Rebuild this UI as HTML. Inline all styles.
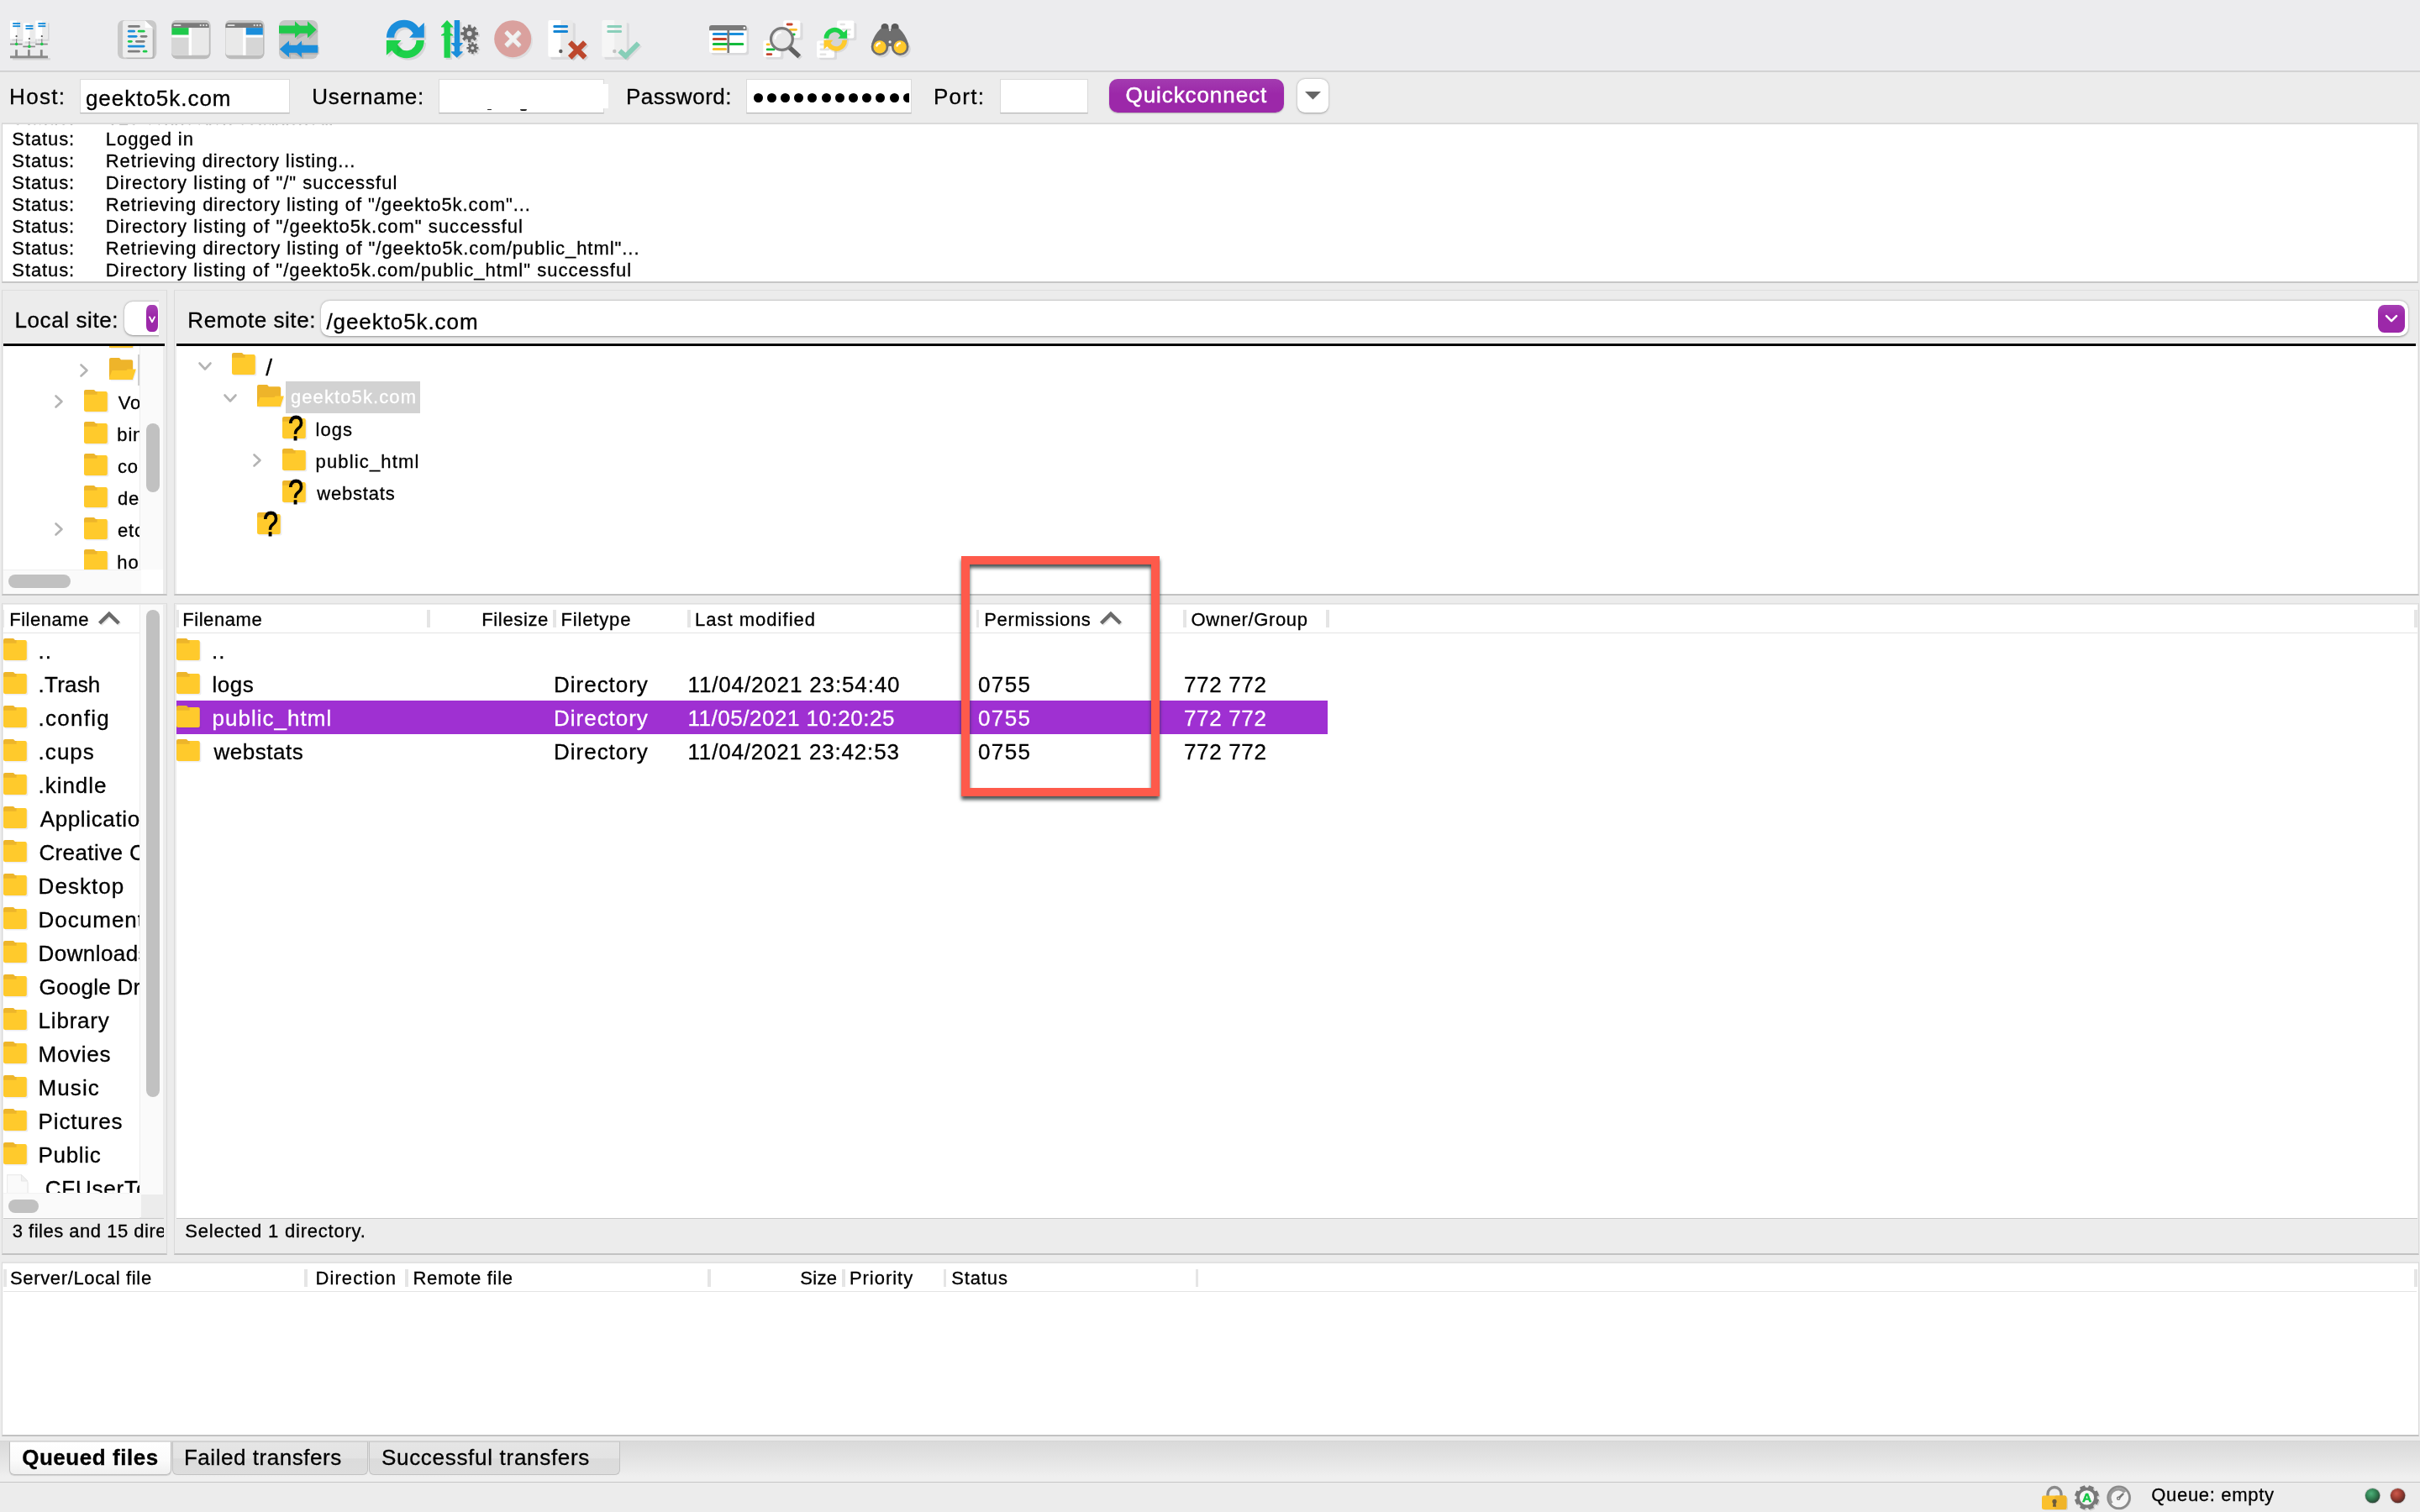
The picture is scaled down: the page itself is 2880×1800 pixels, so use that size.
<!DOCTYPE html>
<html lang="en"><head><meta charset="utf-8"><title>FileZilla</title>
<style>
html,body{margin:0;padding:0;}
body{width:2880px;height:1800px;overflow:hidden;background:#ECECEC;font-family:"Liberation Sans", sans-serif;position:relative;will-change:transform;}
div,span.t,svg{position:absolute;box-sizing:border-box;}
span.t{white-space:pre;line-height:1;-webkit-text-stroke:0.3px currentColor;-webkit-font-smoothing:antialiased;}
.clip{overflow:hidden;}
</style></head><body>
<div style="left:0px;top:0px;width:2880px;height:84px;background:#ECECEE;"></div>
<div style="left:0px;top:84px;width:2880px;height:2px;background:linear-gradient(#C9C9C9,#DDDDDD);"></div>
<svg style="left:12px;top:24.5px;" width="48" height="47" viewBox="0 0 48 47" overflow="visible"><rect x="2.5" y="2.5" width="14" height="21.3" fill="#000" opacity=".09"/><rect x="32.7" y="2.5" width="14" height="21.3" fill="#000" opacity=".09"/><rect x="17.8" y="5.4" width="14" height="21.3" fill="#000" opacity=".09"/><rect x="0" y="-0.5" width="14.4" height="21.9" fill="#fff"/><rect x="8" y="-0.5" width="6.4" height="21.9" fill="#EAEAEA"/><rect x="3.2" y="2.1" width="8.9" height="1.9" fill="#1B8EDB"/><rect x="3.2" y="5.2" width="8.9" height="1.9" fill="#1B8EDB"/><circle cx="7.6" cy="18.2" r="1.1" fill="#555"/><rect x="7" y="21.3" width="1.2" height="6" fill="#8A8A8A"/><rect x="0" y="26.7" width="14.6" height="1.7" fill="#8A8A8A"/><circle cx="7.6" cy="27.5" r="1.8" fill="#1FC94B"/><rect x="6.2" y="28.4" width="0" height="0"/><rect x="30.2" y="-0.5" width="14.4" height="21.9" fill="#fff"/><rect x="38.2" y="-0.5" width="6.4" height="21.9" fill="#EAEAEA"/><rect x="33.4" y="2.1" width="8.9" height="1.9" fill="#1B8EDB"/><rect x="33.4" y="5.2" width="8.9" height="1.9" fill="#1B8EDB"/><circle cx="37.8" cy="18.2" r="1.1" fill="#555"/><rect x="37.2" y="21.3" width="1.2" height="6" fill="#8A8A8A"/><rect x="30.2" y="26.7" width="14.6" height="1.7" fill="#8A8A8A"/><circle cx="37.8" cy="27.5" r="1.8" fill="#1FC94B"/><rect x="36.4" y="28.4" width="0" height="0"/><rect x="15.3" y="2.4" width="14.4" height="21.9" fill="#fff"/><rect x="23.3" y="2.4" width="6.4" height="21.9" fill="#EAEAEA"/><rect x="18.5" y="5.0" width="8.9" height="1.9" fill="#1B8EDB"/><rect x="18.5" y="8.1" width="8.9" height="1.9" fill="#1B8EDB"/><circle cx="22.9" cy="21.099999999999998" r="1.1" fill="#555"/><rect x="22.3" y="24.2" width="1.2" height="6" fill="#8A8A8A"/><rect x="15.3" y="29.599999999999998" width="14.6" height="1.7" fill="#8A8A8A"/><circle cx="22.9" cy="30.4" r="1.8" fill="#1FC94B"/><rect x="21.5" y="31.299999999999997" width="0" height="0"/><rect x="6.1" y="34.2" width="2.8" height="8" fill="#8A8A8A"/><rect x="21.0" y="34.2" width="2.8" height="8" fill="#8A8A8A"/><rect x="35.9" y="34.2" width="2.8" height="8" fill="#8A8A8A"/><rect x="3" y="44" width="45" height="2.6" fill="#000" opacity=".09"/><rect x="0" y="41.4" width="45" height="2.9" fill="#8A8A8A"/></svg>
<svg style="left:140px;top:24px;" width="47" height="47" viewBox="0 0 47 47" overflow="visible"><rect x="0" y="0" width="46.3" height="46.3" rx="7" fill="#C9C9C9"/><path d="M8 3h26l9.5 9v34h-30A5.5 5.5 0 0 1 8 40.5z" fill="#000" opacity=".10"/><path d="M6.1 3A2.5 2.5 0 0 1 8.6 0.5h24l9.1 8.6v33A2.5 2.5 0 0 1 39.2 44.6H8.6A2.5 2.5 0 0 1 6.1 42.1z" fill="#EEEEEE"/><path d="M32.6 0.5l9.1 8.6h-9.1z" fill="#fff"/><rect x="12.2" y="6.0" width="14.6" height="2.8" rx="1.4" fill="#7E7E7E"/><rect x="11.9" y="11.799999999999999" width="9.1" height="2.8" rx="1.4" fill="#1B8EDB"/><rect x="23.8" y="11.799999999999999" width="8.8" height="2.8" rx="1.4" fill="#1FC94B"/><rect x="11.9" y="17.900000000000002" width="11.6" height="2.8" rx="1.4" fill="#1B8EDB"/><rect x="26.8" y="17.900000000000002" width="8.6" height="2.8" rx="1.4" fill="#7E7E7E"/><rect x="11.9" y="23.900000000000002" width="5.8" height="2.8" rx="1.4" fill="#1FC94B"/><rect x="21" y="23.900000000000002" width="11.6" height="2.8" rx="1.4" fill="#7E7E7E"/><rect x="11.9" y="29.700000000000003" width="20.7" height="2.8" rx="1.4" fill="#1B8EDB"/><rect x="11.9" y="35.800000000000004" width="14.9" height="2.8" rx="1.4" fill="#7E7E7E"/><rect x="29.8" y="35.800000000000004" width="5.6" height="2.8" rx="1.4" fill="#1FC94B"/></svg>
<svg style="left:204px;top:24px;" width="47" height="47" viewBox="0 0 47 47" overflow="visible"><rect x="0" y="0" width="46.6" height="46.2" rx="7" fill="#BCBCBC"/><rect x="0" y="0" width="46.6" height="12" rx="6" fill="#C8C8C8"/><clipPath id="wc204"><rect x="0.4" y="3.3" width="44.4" height="38.4" rx="3.5"/></clipPath><g clip-path="url(#wc204)"><rect x="0" y="3" width="47" height="6.2" fill="#7A7A7A"/><rect x="0" y="9.1" width="47" height="33" fill="#E9E9E9"/><rect x="0" y="9.1" width="20.7" height="8.6" fill="#1FC94B"/><rect x="0" y="17.7" width="20.7" height="3" fill="#fff"/><rect x="0" y="20.7" width="20.7" height="21" fill="#D6D6D6"/><rect x="20.7" y="9.1" width="3.3" height="33" fill="#fff"/></g><rect x="2.5" y="5.2" width="9" height="1.8" rx=".9" fill="#E6E6E6"/><circle cx="34.7" cy="6.1" r="1.1" fill="#E6E6E6"/><circle cx="38.2" cy="6.1" r="1.1" fill="#E6E6E6"/><circle cx="41.7" cy="6.1" r="1.1" fill="#E6E6E6"/></svg>
<svg style="left:268px;top:24px;" width="47" height="47" viewBox="0 0 47 47" overflow="visible"><rect x="0" y="0" width="46.6" height="46.2" rx="7" fill="#BCBCBC"/><rect x="0" y="0" width="46.6" height="12" rx="6" fill="#C8C8C8"/><clipPath id="wc268"><rect x="0.4" y="3.3" width="44.4" height="38.4" rx="3.5"/></clipPath><g clip-path="url(#wc268)"><rect x="0" y="3" width="47" height="6.2" fill="#7A7A7A"/><rect x="0" y="9.1" width="47" height="33" fill="#E9E9E9"/><rect x="24.5" y="9.1" width="22" height="8.6" fill="#1B8EDB"/><rect x="24.5" y="17.7" width="22" height="3" fill="#fff"/><rect x="24.5" y="20.7" width="22" height="21" fill="#D6D6D6"/><rect x="21.2" y="9.1" width="3.3" height="33" fill="#fff"/></g><rect x="2.5" y="5.2" width="9" height="1.8" rx=".9" fill="#E6E6E6"/><circle cx="34.7" cy="6.1" r="1.1" fill="#E6E6E6"/><circle cx="38.2" cy="6.1" r="1.1" fill="#E6E6E6"/><circle cx="41.7" cy="6.1" r="1.1" fill="#E6E6E6"/></svg>
<svg style="left:332px;top:24px;" width="47" height="47" viewBox="0 0 47 47" overflow="visible"><rect x="0" y="0" width="46.3" height="46.3" rx="7" fill="#C6C6C6"/><g fill="#000" opacity=".10" transform="translate(2,2)"><path d="M0 6.6H19V1.2L29.5 11.2L34 6.8V1.2L44.6 11.2L34 21.2V15.8H29.7L19 21.2V15.7H0z"/><path d="M46 29.8H27V24.6L16.5 34.4L12 29.9V24.6L.8 34.4L12 44.2V38.8H16.3L27 44.2V38.8H46z"/></g><path d="M0 6.6H19V1.2L29.5 11.2L34 6.8V1.2L44.6 11.2L34 21.2V15.6L29.5 11.2L19 21.2V15.7H0z" fill="#1FC94B"/><path d="M19 6.6H34V15.7H19z" fill="#1FC94B"/><path d="M46.3 29.8H27V24.6L16.5 34.4L12 29.9V24.6L.8 34.4L12 44.2V38.8L16.5 34.4L27 44.2V38.8H46.3z" fill="#1B8EDB"/><path d="M12 29.8H27V38.8H12z" fill="#1B8EDB"/></svg>
<svg style="left:460px;top:24px;" width="48" height="48" viewBox="0 0 48 48" overflow="visible"><g transform="translate(2.4,2.6)" opacity=".09" fill="#000"><path d="M-0.1 20.8A21 21 0 0 1 38.3 8.9L44.8 3.1V20.8H27.1L31.7 15.8A11.7 11.7 0 0 0 9.2 20.8Z"/><path d="M-0.1 20.8A21 21 0 0 1 38.3 8.9L44.8 3.1V20.8H27.1L31.7 15.8A11.7 11.7 0 0 0 9.2 20.8Z" transform="rotate(180 22.34 22.43)"/></g><path d="M-0.1 20.8A21 21 0 0 1 38.3 8.9L44.8 3.1V20.8H27.1L31.7 15.8A11.7 11.7 0 0 0 9.2 20.8Z" fill="#1B8EDB"/><path d="M-0.1 20.8A21 21 0 0 1 38.3 8.9L44.8 3.1V20.8H27.1L31.7 15.8A11.7 11.7 0 0 0 9.2 20.8Z" fill="#1CD14A" transform="rotate(180 22.34 22.43)"/><path d="M8.5 29.5L15 36L8.5 42z" fill="#12BD3E" opacity=".55" transform="translate(4,-1)"/></svg>
<svg style="left:524.6px;top:24px;" width="48" height="48" viewBox="0 0 48 48" overflow="visible"><g transform="translate(2.2,2.4)" fill="#000" opacity=".09"><path d="M7.05 0.1L14.1 7.4V8.4H10.8V15.2L14.1 17.5V18.5H10.8V44.7H3.5V18.5H0V17.5L3.5 15.2V8.4H0V7.4Z"/><path d="M15.7 -0.1H22.1V27H25.7V28L22.1 31.2V37.2H25.7V38.2L18.7 44.7L11.9 38.2V37.2H15.7V31.2L11.9 28V27H15.7Z"/></g><path d="M7.05 0.1L14.1 7.4V8.4H10.8V15.2L14.1 17.5V18.5H10.8V44.7H3.5V18.5H0V17.5L3.5 15.2V8.4H0V7.4Z" fill="#1CD14A"/><path d="M15.7 -0.1H22.1V27H25.7V28L22.1 31.2V37.2H25.7V38.2L18.7 44.7L11.9 38.2V37.2H15.7V31.2L11.9 28V27H15.7Z" fill="#1B8EDB"/><g transform="translate(1.8,2)" opacity=".10"><polygon points="44.09,14.18 44.09,17.82 40.75,17.70 39.87,19.81 42.32,22.10 39.75,24.67 37.46,22.22 35.35,23.10 35.47,26.44 31.83,26.44 31.95,23.10 29.84,22.22 27.55,24.67 24.98,22.10 27.43,19.81 26.55,17.70 23.21,17.82 23.21,14.18 26.55,14.30 27.43,12.19 24.98,9.90 27.55,7.33 29.84,9.78 31.95,8.90 31.83,5.56 35.47,5.56 35.35,8.90 37.46,9.78 39.75,7.33 42.32,9.90 39.87,12.19 40.75,14.30" fill="#000"/><polygon points="44.39,31.98 44.39,34.42 42.16,34.34 41.58,35.76 43.21,37.28 41.48,39.01 39.96,37.38 38.54,37.96 38.62,40.19 36.18,40.19 36.26,37.96 34.84,37.38 33.32,39.01 31.59,37.28 33.22,35.76 32.64,34.34 30.41,34.42 30.41,31.98 32.64,32.06 33.22,30.64 31.59,29.12 33.32,27.39 34.84,29.02 36.26,28.44 36.18,26.21 38.62,26.21 38.54,28.44 39.96,29.02 41.48,27.39 43.21,29.12 41.58,30.64 42.16,32.06" fill="#000"/></g><polygon points="44.09,14.18 44.09,17.82 40.75,17.70 39.87,19.81 42.32,22.10 39.75,24.67 37.46,22.22 35.35,23.10 35.47,26.44 31.83,26.44 31.95,23.10 29.84,22.22 27.55,24.67 24.98,22.10 27.43,19.81 26.55,17.70 23.21,17.82 23.21,14.18 26.55,14.30 27.43,12.19 24.98,9.90 27.55,7.33 29.84,9.78 31.95,8.90 31.83,5.56 35.47,5.56 35.35,8.90 37.46,9.78 39.75,7.33 42.32,9.90 39.87,12.19 40.75,14.30" fill="#6A6A6A"/><circle cx="33.65" cy="16" r="3.0" fill="#DDDDDF"/><polygon points="44.39,31.98 44.39,34.42 42.16,34.34 41.58,35.76 43.21,37.28 41.48,39.01 39.96,37.38 38.54,37.96 38.62,40.19 36.18,40.19 36.26,37.96 34.84,37.38 33.32,39.01 31.59,37.28 33.22,35.76 32.64,34.34 30.41,34.42 30.41,31.98 32.64,32.06 33.22,30.64 31.59,29.12 33.32,27.39 34.84,29.02 36.26,28.44 36.18,26.21 38.62,26.21 38.54,28.44 39.96,29.02 41.48,27.39 43.21,29.12 41.58,30.64 42.16,32.06" fill="#6A6A6A"/><circle cx="37.4" cy="33.2" r="1.9" fill="#DDDDDF"/></svg>
<svg style="left:588px;top:24px;" width="48" height="48" viewBox="0 0 48 48" overflow="visible"><circle cx="24" cy="24.6" r="22" fill="#000" opacity=".06"/><circle cx="22.2" cy="22.2" r="22" fill="#DAA19E"/><path d="M14 13.8L30.4 30.2M30.4 13.8L14 30.2" stroke="#D9D9D9" stroke-width="4.8" transform="translate(.6,1.2)"/><path d="M14 13.8L30.4 30.2M30.4 13.8L14 30.2" stroke="#F2F2F2" stroke-width="4.8"/></svg>
<svg style="left:652px;top:24px;" width="50" height="50" viewBox="0 0 50 50" overflow="visible"><rect x="3.4" y="3.2" width="29.5" height="43.8" rx="2" fill="#000" opacity=".07"/><rect x=".3" y="0" width="29.5" height="43.8" rx="2" fill="#E9E9E9"/><path d="M2.3 0H15.2V43.8H2.3A2 2 0 0 1 .3 41.8V2A2 2 0 0 1 2.3 0z" fill="#FFFFFF"/><rect x="6.4" y="6" width="17.6" height="2.9" rx="1.2" fill="#1585D4"/><rect x="6.4" y="12" width="17.6" height="2.9" rx="1.2" fill="#1585D4"/><circle cx="15.3" cy="37" r="2.2" fill="#5E5E5E"/><path d="M26.2 26.4L44.2 44.4M44.2 26.4L26.2 44.4" stroke="#000" opacity=".10" stroke-width="6.3" transform="translate(2,2)"/><path d="M26.2 26.4L44.2 44.4M44.2 26.4L26.2 44.4" stroke="#BD472D" stroke-width="6.3"/></svg>
<svg style="left:716px;top:24px;" width="50" height="50" viewBox="0 0 50 50" overflow="visible"><rect x="3.4" y="3.2" width="29.5" height="43.8" rx="2" fill="#000" opacity=".07"/><rect x=".3" y="0" width="29.5" height="43.8" rx="2" fill="#EEEEEE"/><path d="M2.3 0H15.2V43.8H2.3A2 2 0 0 1 .3 41.8V2A2 2 0 0 1 2.3 0z" fill="#F6F6F6"/><rect x="6.4" y="6" width="17.6" height="2.9" rx="1.2" fill="#8ACFBA"/><rect x="6.4" y="12" width="17.6" height="2.9" rx="1.2" fill="#8ACFBA"/><circle cx="15.3" cy="37" r="2.2" fill="#C2C2C2"/><path d="M21.4 36.5L28.5 42.8L43.8 27.5" fill="none" stroke="#000" opacity=".07" stroke-width="5.9" transform="translate(2,2)"/><path d="M21.4 36.5L28.5 42.8L43.8 27.5" fill="none" stroke="#87CEB8" stroke-width="5.9"/></svg>
<svg style="left:844px;top:29.8px;" width="48" height="36" viewBox="0 0 48 36" overflow="visible"><rect x="2.6" y="2.6" width="44.6" height="33" rx="3" fill="#000" opacity=".08"/><rect x="0" y="0" width="44.6" height="33" rx="3" fill="#fff"/><path d="M0 6.2V3A3 3 0 0 1 3 0H41.6A3 3 0 0 1 44.6 3V6.2z" fill="#7A7A7A"/><circle cx="41.8" cy="3.2" r="1.2" fill="#fff"/><rect x="3.8" y="8.9" width="37.5" height="3" rx="1.5" fill="#1B8EDB"/><rect x="3.8" y="15.0" width="17.2" height="3" rx="1.5" fill="#C5432B"/><rect x="3.8" y="21.1" width="37.5" height="3" rx="1.5" fill="#13BB3C"/><rect x="3.8" y="27.1" width="17.2" height="3" rx="1.5" fill="#FBC02D"/><rect x="21.4" y="5.8" width="2.7" height="27.2" fill="#7A7A7A"/></svg>
<svg style="left:908px;top:24.5px;" width="48" height="48" viewBox="0 0 48 48" overflow="visible"><rect x="27.4" y="2" width="20.2" height="20.8" rx="2" fill="#000" opacity=".07"/><rect x="3.5" y="25.8" width="20.9" height="20" rx="2" fill="#000" opacity=".07"/><rect x="24.2" y="-0.8" width="20.2" height="20.8" rx="2" fill="#fff"/><rect x=".3" y="23" width="20.9" height="20" rx="2" fill="#fff"/><rect x="27.7" y="2.6" width="7.9" height="2.8" rx="1.4" fill="#C5432B"/><rect x="31" y="8.9" width="9.9" height="2.8" rx="1.4" fill="#FBC02D"/><rect x="35" y="14.6" width="3.6" height="2.8" rx="1.4" fill="#13BB3C"/><rect x="3.7" y="26.5" width="5.0" height="2.8" rx="1.4" fill="#FBC02D"/><rect x="3.7" y="32.5" width="10.8" height="2.8" rx="1.4" fill="#13BB3C"/><rect x="3.7" y="38.300000000000004" width="7.5" height="2.8" rx="1.4" fill="#C5432B"/><path d="M31.5 31.5L43.2 42.2" stroke="#000" opacity=".10" stroke-width="5.6" transform="translate(1.8,2)"/><circle cx="24" cy="23.4" r="13" fill="#000" opacity=".08"/><path d="M31.5 31.5L43.2 42.2" stroke="#606060" stroke-width="5.6"/><circle cx="22.4" cy="21.5" r="12.9" fill="#E9E9E9" stroke="#7A7A7A" stroke-width="3.2"/><path d="M14.5 21A8 8 0 0 1 21 13.7" fill="none" stroke="#fff" stroke-width="2.2" stroke-linecap="round"/></svg>
<svg style="left:972px;top:24.5px;" width="48" height="48" viewBox="0 0 48 48" overflow="visible"><rect x="27" y="2.2" width="20.4" height="21" rx="2" fill="#000" opacity=".07"/><rect x="3.1" y="26" width="20.9" height="20.3" rx="2" fill="#000" opacity=".07"/><rect x="24" y="-0.4" width="20.4" height="21" rx="2" fill="#fff"/><rect x="0.1" y="23.4" width="20.9" height="20.3" rx="2" fill="#fff"/><rect x="27.5" y="2.7" width="6.5" height="2.6" rx="1.3" fill="#E3E3E3"/><rect x="30" y="9.0" width="11.0" height="2.6" rx="1.3" fill="#E3E3E3"/><rect x="36" y="14.7" width="4.0" height="2.6" rx="1.3" fill="#E3E3E3"/><rect x="3.5" y="26.599999999999998" width="5.5" height="2.6" rx="1.3" fill="#E3E3E3"/><rect x="3.5" y="32.6" width="11.5" height="2.6" rx="1.3" fill="#E3E3E3"/><rect x="3.5" y="38.400000000000006" width="8.0" height="2.6" rx="1.3" fill="#E3E3E3"/><circle cx="24.3" cy="24.2" r="13.6" fill="#000" opacity=".08"/><circle cx="22.3" cy="21.8" r="9.5" fill="#D4D4D4"/><g transform="translate(8.56,8.01) scale(0.615)"><path d="M-0.1 20.8A21 21 0 0 1 38.3 8.9L44.8 3.1V20.8H27.1L31.7 15.8A11.7 11.7 0 0 0 9.2 20.8Z" fill="#1CD14A"/><path d="M-0.1 20.8A21 21 0 0 1 38.3 8.9L44.8 3.1V20.8H27.1L31.7 15.8A11.7 11.7 0 0 0 9.2 20.8Z" fill="#FFCA2C" transform="rotate(180 22.34 22.43)"/></g></svg>
<svg style="left:1036.5px;top:26.5px;" width="48" height="44" viewBox="0 0 48 44" overflow="visible"><g transform="translate(2.4,2.4)" fill="#000" opacity=".09"><circle cx="10" cy="28.8" r="10.3"/><circle cx="34.2" cy="28.8" r="10.3"/><path d="M11 8H33L40 24H4z"/></g><rect x="11.6" y="0.9" width="8.9" height="10" rx="4.2" fill="#595959"/><rect x="23.7" y="0.9" width="8.9" height="10" rx="4.2" fill="#595959"/><path d="M10.8 7.2H21.3L20.4 28.8L0.3 25Q3.2 14.5 10.8 7.2Z" fill="#6E6E6E"/><path d="M10.8 7.2H21.3L20.4 28.8L0.3 25Q3.2 14.5 10.8 7.2Z" fill="#6E6E6E" transform="translate(44.2,0) scale(-1,1)"/><rect x="19" y="10" width="6.2" height="18" fill="#6E6E6E"/><circle cx="10" cy="28.8" r="10.3" fill="#6E6E6E"/><circle cx="34.2" cy="28.8" r="10.3" fill="#6E6E6E"/><circle cx="10" cy="28.8" r="7.6" fill="#FFC92C"/><circle cx="34.2" cy="28.8" r="7.6" fill="#FFC92C"/><path d="M6.4 27.4A4.4 4.4 0 0 1 9.8 24.4" fill="none" stroke="#fff" stroke-width="2.4" stroke-linecap="round"/><path d="M30.6 27.4A4.4 4.4 0 0 1 34 24.4" fill="none" stroke="#fff" stroke-width="2.4" stroke-linecap="round"/><circle cx="22.1" cy="22.9" r="1.6" fill="#F4F4F4"/></svg>
<span class="t" id="t1" style="left:11.12px;top:102.19px;font-size:26px;color:#000;letter-spacing:1.299px;">Host:</span>
<div style="left:95px;top:93.5px;width:249.5px;height:41px;background:#fff;border:1px solid #DADADA;border-bottom-color:#B8B8B8;box-shadow:0 1px 0 rgba(0,0,0,.06);"></div>
<span class="t" id="t2" style="left:101.94px;top:103.59px;font-size:26px;color:#000;letter-spacing:0.972px;">geekto5k.com</span>
<span class="t" id="t3" style="left:371.22px;top:102.19px;font-size:26px;color:#000;letter-spacing:0.727px;">Username:</span>
<div style="left:522px;top:93.5px;width:196.5px;height:41px;background:#fff;border:1px solid #DADADA;border-bottom-color:#B8B8B8;box-shadow:0 1px 0 rgba(0,0,0,.06);"></div>
<div style="left:700px;top:100px;width:24px;height:28.5px;background:#fff;"></div>
<div style="left:580px;top:129.5px;width:5px;height:1.5px;background:#222;border-radius:1px;"></div>
<div style="left:619px;top:129.5px;width:8px;height:2px;background:#222;border-radius:0 0 4px 4px;"></div>
<span class="t" id="t4" style="left:744.92px;top:102.19px;font-size:26px;color:#000;letter-spacing:0.537px;">Password:</span>
<div style="left:887.5px;top:93.5px;width:197px;height:41px;background:#fff;border:1px solid #DADADA;border-bottom-color:#B8B8B8;box-shadow:0 1px 0 rgba(0,0,0,.06);"></div>
<div class="clip" style="left:889px;top:95px;width:193px;height:38px;"><div style="left:7.5px;top:16.3px;width:11.2px;height:11.2px;border-radius:50%;background:#000;"></div><div style="left:23.7px;top:16.3px;width:11.2px;height:11.2px;border-radius:50%;background:#000;"></div><div style="left:39.9px;top:16.3px;width:11.2px;height:11.2px;border-radius:50%;background:#000;"></div><div style="left:56.1px;top:16.3px;width:11.2px;height:11.2px;border-radius:50%;background:#000;"></div><div style="left:72.3px;top:16.3px;width:11.2px;height:11.2px;border-radius:50%;background:#000;"></div><div style="left:88.5px;top:16.3px;width:11.2px;height:11.2px;border-radius:50%;background:#000;"></div><div style="left:104.7px;top:16.3px;width:11.2px;height:11.2px;border-radius:50%;background:#000;"></div><div style="left:120.9px;top:16.3px;width:11.2px;height:11.2px;border-radius:50%;background:#000;"></div><div style="left:137.1px;top:16.3px;width:11.2px;height:11.2px;border-radius:50%;background:#000;"></div><div style="left:153.3px;top:16.3px;width:11.2px;height:11.2px;border-radius:50%;background:#000;"></div><div style="left:169.5px;top:16.3px;width:11.2px;height:11.2px;border-radius:50%;background:#000;"></div><div style="left:185.7px;top:16.3px;width:11.2px;height:11.2px;border-radius:50%;background:#000;"></div></div>
<span class="t" id="t5" style="left:1111.02px;top:102.19px;font-size:26px;color:#000;letter-spacing:1.243px;">Port:</span>
<div style="left:1189.5px;top:93.5px;width:105px;height:41px;background:#fff;border:1px solid #DADADA;border-bottom-color:#B8B8B8;box-shadow:0 1px 0 rgba(0,0,0,.06);"></div>
<div style="left:1320px;top:93.8px;width:208px;height:40px;background:linear-gradient(#A33BB0,#9C28A9 45%);border-radius:10px;box-shadow:0 1px 1.5px rgba(0,0,0,.25);"></div>
<span class="t" id="t6" style="left:1339.53px;top:99.59px;font-size:26px;color:#fff;letter-spacing:0.919px;-webkit-text-stroke:0.5px #fff;">Quickconnect</span>
<div style="left:1544px;top:93.8px;width:36.5px;height:40px;background:#fff;border-radius:9px;box-shadow:0 0.5px 2.5px rgba(0,0,0,.35);"></div>
<svg style="left:1553px;top:109px;" width="19" height="10" viewBox="0 0 19 10" overflow="visible"><path d="M0 0H19L9.5 9.6z" fill="#666"/></svg>
<div style="left:2px;top:145.5px;width:2876px;height:191px;background:#fff;border:1px solid #D2D2D2;border-top:2px solid #DADADA;border-bottom:2px solid #C6C6C6;"></div>
<div class="clip" style="left:4px;top:147.5px;width:2872px;height:187px;">
<span class="t" id="t7" style="left:10.36px;top:-17.42px;font-size:22px;color:#000;letter-spacing:0.882px;">Status:</span>
<span class="t" id="t8" style="left:123.21px;top:-17.42px;font-size:22px;color:#000;letter-spacing:-0.260px;">TLS connection established.</span>
<span class="t" id="t9" style="left:10.36px;top:7.58px;font-size:22px;color:#000;letter-spacing:0.882px;">Status:</span>
<span class="t" id="t10" style="left:121.83px;top:7.58px;font-size:22px;color:#000;letter-spacing:0.926px;">Logged in</span>
<span class="t" id="t11" style="left:10.36px;top:33.63px;font-size:22px;color:#000;letter-spacing:0.882px;">Status:</span>
<span class="t" id="t12" style="left:121.83px;top:33.63px;font-size:22px;color:#000;letter-spacing:0.877px;">Retrieving directory listing...</span>
<span class="t" id="t13" style="left:10.36px;top:59.68px;font-size:22px;color:#000;letter-spacing:0.882px;">Status:</span>
<span class="t" id="t14" style="left:121.83px;top:59.68px;font-size:22px;color:#000;letter-spacing:1.029px;">Directory listing of "/" successful</span>
<span class="t" id="t15" style="left:10.36px;top:85.73px;font-size:22px;color:#000;letter-spacing:0.882px;">Status:</span>
<span class="t" id="t16" style="left:121.83px;top:85.73px;font-size:22px;color:#000;letter-spacing:0.929px;">Retrieving directory listing of "/geekto5k.com"...</span>
<span class="t" id="t17" style="left:10.36px;top:111.78px;font-size:22px;color:#000;letter-spacing:0.882px;">Status:</span>
<span class="t" id="t18" style="left:121.83px;top:111.78px;font-size:22px;color:#000;letter-spacing:1.033px;">Directory listing of "/geekto5k.com" successful</span>
<span class="t" id="t19" style="left:10.36px;top:137.83px;font-size:22px;color:#000;letter-spacing:0.882px;">Status:</span>
<span class="t" id="t20" style="left:121.83px;top:137.83px;font-size:22px;color:#000;letter-spacing:0.948px;">Retrieving directory listing of "/geekto5k.com/public_html"...</span>
<span class="t" id="t21" style="left:10.36px;top:163.88px;font-size:22px;color:#000;letter-spacing:0.882px;">Status:</span>
<span class="t" id="t22" style="left:121.83px;top:163.88px;font-size:22px;color:#000;letter-spacing:1.025px;">Directory listing of "/geekto5k.com/public_html" successful</span>
</div>
<div style="left:2px;top:344.9px;width:196.5px;height:364.1px;background:#ECECEC;border:1px solid #D9D9D9;border-bottom:2px solid #C2C2C2;border-top-color:#DEDEDE;"></div>
<div style="left:207px;top:344.9px;width:2671.5px;height:364.1px;background:#ECECEC;border:1px solid #D9D9D9;border-bottom:2px solid #C2C2C2;border-top-color:#DEDEDE;"></div>
<div style="left:2px;top:718px;width:196.5px;height:775.5px;background:#ECECEC;border:1px solid #D9D9D9;border-bottom:2px solid #C2C2C2;border-top-color:#DEDEDE;"></div>
<div style="left:207px;top:718px;width:2671.5px;height:775.5px;background:#ECECEC;border:1px solid #D9D9D9;border-bottom:2px solid #C2C2C2;border-top-color:#DEDEDE;"></div>
<span class="t" id="t23" style="left:17.42px;top:367.99px;font-size:26px;color:#000;letter-spacing:0.612px;">Local site:</span>
<div class="clip" style="left:140px;top:352px;width:49.2px;height:54px;">
<div style="left:7.7px;top:6.6px;width:60px;height:40.6px;background:#fff;border-radius:10px;box-shadow:0 0.5px 2.5px rgba(0,0,0,.4);"></div>
<div style="left:34px;top:10.6px;width:14.2px;height:32.8px;background:linear-gradient(#A640B4,#9C28A9 40%);border-radius:5px / 7px;"></div>
<svg style="left:37.1px;top:24.4px;" width="8" height="9" viewBox="0 0 8 9" overflow="visible"><path d="M1 1.4L4 7.2L7 1.4" fill="none" stroke="#fff" stroke-width="1.9" stroke-linecap="round" stroke-linejoin="round"/></svg>
</div>
<div style="left:3.8px;top:409.2px;width:191.9px;height:2.5px;background:#000;"></div>
<div class="clip" style="left:3.8px;top:412px;width:162px;height:266px;background:#fff;">
<svg style="left:126.2px;top:-24.100000000000023px;" width="34" height="28" viewBox="0 0 34 28" overflow="visible"><path d="M1.8 4h26.8v13l4.4-2.2-4 11.6a2.2 2.2 0 0 1-2 1.2H2z" fill="#3A3A6A" opacity=".08"/><path d="M0 2A2 2 0 0 1 2 0h9.4a2 2 0 0 1 1.6.9l.9 1.4H26.1A2 2 0 0 1 28.1 4.3V25.8H0z" fill="#EEB42A"/><path d="M3.4 14.9H20.5L21.5 13.4H31.9L28.3 24.3A2.2 2.2 0 0 1 26.2 25.8H2A2 2 0 0 1 .1 23.4z" fill="#FFCA2C"/></svg>
<svg style="left:91.2px;top:20.5px;" width="10" height="16" viewBox="0 0 10 16" overflow="visible"><path d="M1.5 1.5L8.5 8L1.5 14.5" fill="none" stroke="#B4B4B4" stroke-width="2.6" stroke-linecap="round" stroke-linejoin="round"/></svg>
<svg style="left:126.2px;top:13.899999999999977px;" width="34" height="28" viewBox="0 0 34 28" overflow="visible"><path d="M1.8 4h26.8v13l4.4-2.2-4 11.6a2.2 2.2 0 0 1-2 1.2H2z" fill="#3A3A6A" opacity=".08"/><path d="M0 2A2 2 0 0 1 2 0h9.4a2 2 0 0 1 1.6.9l.9 1.4H26.1A2 2 0 0 1 28.1 4.3V25.8H0z" fill="#EEB42A"/><path d="M3.4 14.9H20.5L21.5 13.4H31.9L28.3 24.3A2.2 2.2 0 0 1 26.2 25.8H2A2 2 0 0 1 .1 23.4z" fill="#FFCA2C"/></svg>
<svg style="left:61.0px;top:57.5px;" width="10" height="16" viewBox="0 0 10 16" overflow="visible"><path d="M1.5 1.5L8.5 8L1.5 14.5" fill="none" stroke="#B4B4B4" stroke-width="2.6" stroke-linecap="round" stroke-linejoin="round"/></svg>
<svg style="left:96.3px;top:51.89999999999998px;" width="30" height="27" viewBox="0 0 30 27" overflow="visible"><rect x="1.6" y="3.8" width="27.8" height="23.6" rx="2" fill="#3A3A6A" opacity=".09"/><rect x="0" y="2.1" width="27.8" height="23.8" rx="2" fill="#FFCA2C"/><path d="M0 2A2 2 0 0 1 2 0h9.4a2 2 0 0 1 1.6 .9l.9 1.2H15.6V5.7H0z" fill="#EDB52A"/></svg>
<span class="t" id="t24" style="left:136.95px;top:57.08px;font-size:22px;color:#000;letter-spacing:0.811px;">Vo</span>
<svg style="left:96.3px;top:89.89999999999998px;" width="30" height="27" viewBox="0 0 30 27" overflow="visible"><rect x="1.6" y="3.8" width="27.8" height="23.6" rx="2" fill="#3A3A6A" opacity=".09"/><rect x="0" y="2.1" width="27.8" height="23.8" rx="2" fill="#FFCA2C"/><path d="M0 2A2 2 0 0 1 2 0h9.4a2 2 0 0 1 1.6 .9l.9 1.2H15.6V5.7H0z" fill="#EDB52A"/></svg>
<span class="t" id="t25" style="left:135.57px;top:95.08px;font-size:22px;color:#000;letter-spacing:0.811px;">bin</span>
<svg style="left:96.3px;top:127.89999999999998px;" width="30" height="27" viewBox="0 0 30 27" overflow="visible"><rect x="1.6" y="3.8" width="27.8" height="23.6" rx="2" fill="#3A3A6A" opacity=".09"/><rect x="0" y="2.1" width="27.8" height="23.8" rx="2" fill="#FFCA2C"/><path d="M0 2A2 2 0 0 1 2 0h9.4a2 2 0 0 1 1.6 .9l.9 1.2H15.6V5.7H0z" fill="#EDB52A"/></svg>
<span class="t" id="t26" style="left:136.26px;top:133.08px;font-size:22px;color:#000;letter-spacing:0.811px;">co</span>
<svg style="left:96.3px;top:165.89999999999998px;" width="30" height="27" viewBox="0 0 30 27" overflow="visible"><rect x="1.6" y="3.8" width="27.8" height="23.6" rx="2" fill="#3A3A6A" opacity=".09"/><rect x="0" y="2.1" width="27.8" height="23.8" rx="2" fill="#FFCA2C"/><path d="M0 2A2 2 0 0 1 2 0h9.4a2 2 0 0 1 1.6 .9l.9 1.2H15.6V5.7H0z" fill="#EDB52A"/></svg>
<span class="t" id="t27" style="left:136.26px;top:171.08px;font-size:22px;color:#000;letter-spacing:0.811px;">de</span>
<svg style="left:61.0px;top:209.5px;" width="10" height="16" viewBox="0 0 10 16" overflow="visible"><path d="M1.5 1.5L8.5 8L1.5 14.5" fill="none" stroke="#B4B4B4" stroke-width="2.6" stroke-linecap="round" stroke-linejoin="round"/></svg>
<svg style="left:96.3px;top:203.89999999999998px;" width="30" height="27" viewBox="0 0 30 27" overflow="visible"><rect x="1.6" y="3.8" width="27.8" height="23.6" rx="2" fill="#3A3A6A" opacity=".09"/><rect x="0" y="2.1" width="27.8" height="23.8" rx="2" fill="#FFCA2C"/><path d="M0 2A2 2 0 0 1 2 0h9.4a2 2 0 0 1 1.6 .9l.9 1.2H15.6V5.7H0z" fill="#EDB52A"/></svg>
<span class="t" id="t28" style="left:136.26px;top:209.08px;font-size:22px;color:#000;letter-spacing:0.811px;">etc</span>
<svg style="left:96.3px;top:241.89999999999998px;" width="30" height="27" viewBox="0 0 30 27" overflow="visible"><rect x="1.6" y="3.8" width="27.8" height="23.6" rx="2" fill="#3A3A6A" opacity=".09"/><rect x="0" y="2.1" width="27.8" height="23.8" rx="2" fill="#FFCA2C"/><path d="M0 2A2 2 0 0 1 2 0h9.4a2 2 0 0 1 1.6 .9l.9 1.2H15.6V5.7H0z" fill="#EDB52A"/></svg>
<span class="t" id="t29" style="left:135.57px;top:247.08px;font-size:22px;color:#000;letter-spacing:0.811px;">ho</span>
<div style="left:160.5px;top:9.600000000000023px;width:1.8px;height:37.5px;background:#CFCFCF;"></div>
</div>
<div style="left:166.3px;top:412px;width:28.1px;height:266px;background:#FAFAFA;border-left:1.7px solid #ECECEC;"></div>
<div style="left:174px;top:504px;width:15.7px;height:81.7px;background:#C1C1C1;border-radius:8px;"></div>
<div style="left:3.8px;top:678px;width:164px;height:28.5px;background:#FAFAFA;border-top:1px solid #EFEFEF;"></div>
<div style="left:167.8px;top:678px;width:26.6px;height:28.5px;background:#fff;"></div>
<div style="left:10px;top:684px;width:73.7px;height:15.8px;background:#C1C1C1;border-radius:8px;"></div>
<span class="t" id="t30" style="left:223.32px;top:367.89px;font-size:26px;color:#000;letter-spacing:0.558px;">Remote site:</span>
<div style="left:381.6px;top:358.4px;width:2484.4px;height:41.3px;background:#fff;border-radius:10px;box-shadow:0 0.5px 2.5px rgba(0,0,0,.4);"></div>
<span class="t" id="t31" style="left:388.45px;top:369.59px;font-size:26px;color:#000;letter-spacing:0.921px;">/geekto5k.com</span>
<div style="left:2830px;top:363px;width:32px;height:32.5px;background:linear-gradient(#A640B4,#9C28A9 40%);border-radius:7.5px;"></div>
<svg style="left:2838px;top:373.5px;" width="16" height="11" viewBox="0 0 16 11" overflow="visible"><path d="M2 2.2L8 8.2L14 2.2" fill="none" stroke="#fff" stroke-width="2.6" stroke-linecap="round" stroke-linejoin="round"/></svg>
<div style="left:209.8px;top:409.2px;width:2665.7px;height:2.5px;background:#000;"></div>
<div style="left:209.5px;top:412px;width:2667px;height:295px;background:#fff;"></div>
<svg style="left:236px;top:431px;" width="16" height="10" viewBox="0 0 16 10" overflow="visible"><path d="M1.5 1.5L8 8.5L14.5 1.5" fill="none" stroke="#B4B4B4" stroke-width="2.6" stroke-linecap="round" stroke-linejoin="round"/></svg>
<svg style="left:275.9px;top:420.1px;" width="30" height="27" viewBox="0 0 30 27" overflow="visible"><rect x="1.6" y="3.8" width="27.8" height="23.6" rx="2" fill="#3A3A6A" opacity=".09"/><rect x="0" y="2.1" width="27.8" height="23.8" rx="2" fill="#FFCA2C"/><path d="M0 2A2 2 0 0 1 2 0h9.4a2 2 0 0 1 1.6 .9l.9 1.2H15.6V5.7H0z" fill="#EDB52A"/></svg>
<span class="t" id="t32" style="left:316.15px;top:423.70px;font-size:28px;color:#000;">/</span>
<svg style="left:266px;top:469px;" width="16" height="10" viewBox="0 0 16 10" overflow="visible"><path d="M1.5 1.5L8 8.5L14.5 1.5" fill="none" stroke="#B4B4B4" stroke-width="2.6" stroke-linecap="round" stroke-linejoin="round"/></svg>
<svg style="left:305.9px;top:457.9px;" width="34" height="28" viewBox="0 0 34 28" overflow="visible"><path d="M1.8 4h26.8v13l4.4-2.2-4 11.6a2.2 2.2 0 0 1-2 1.2H2z" fill="#3A3A6A" opacity=".08"/><path d="M0 2A2 2 0 0 1 2 0h9.4a2 2 0 0 1 1.6.9l.9 1.4H26.1A2 2 0 0 1 28.1 4.3V25.8H0z" fill="#EEB42A"/><path d="M3.4 14.9H20.5L21.5 13.4H31.9L28.3 24.3A2.2 2.2 0 0 1 26.2 25.8H2A2 2 0 0 1 .1 23.4z" fill="#FFCA2C"/></svg>
<div style="left:339.8px;top:454px;width:160px;height:37.7px;background:#D2D2D2;"></div>
<span class="t" id="t33" style="left:345.96px;top:462.18px;font-size:22px;color:#fff;letter-spacing:1.097px;">geekto5k.com</span>
<svg style="left:335.9px;top:495.9px;" width="30" height="27" viewBox="0 0 30 27" overflow="visible"><rect x="1.6" y="3.8" width="27.8" height="23.6" rx="2" fill="#3A3A6A" opacity=".09"/><rect x="0" y="2.1" width="27.8" height="23.8" rx="2" fill="#FFCA2C"/><path d="M0 2A2 2 0 0 1 2 0h9.4a2 2 0 0 1 1.6 .9l.9 1.2H15.6V5.7H0z" fill="#EDB52A"/></svg>
<span class="t" style="left:343.0px;top:488.8px;font-size:41.9px;color:#000;-webkit-text-stroke:0.9px #000;transform:scaleX(.78);transform-origin:0 0;">?</span>
<span class="t" id="t34" style="left:375.57px;top:500.88px;font-size:22px;color:#000;letter-spacing:1.001px;">logs</span>
<svg style="left:301px;top:540.3px;" width="10" height="16" viewBox="0 0 10 16" overflow="visible"><path d="M1.5 1.5L8.5 8L1.5 14.5" fill="none" stroke="#B4B4B4" stroke-width="2.6" stroke-linecap="round" stroke-linejoin="round"/></svg>
<svg style="left:335.9px;top:534px;" width="30" height="27" viewBox="0 0 30 27" overflow="visible"><rect x="1.6" y="3.8" width="27.8" height="23.6" rx="2" fill="#3A3A6A" opacity=".09"/><rect x="0" y="2.1" width="27.8" height="23.8" rx="2" fill="#FFCA2C"/><path d="M0 2A2 2 0 0 1 2 0h9.4a2 2 0 0 1 1.6 .9l.9 1.2H15.6V5.7H0z" fill="#EDB52A"/></svg>
<span class="t" id="t35" style="left:375.57px;top:538.98px;font-size:22px;color:#000;letter-spacing:1.145px;">public_html</span>
<svg style="left:335.9px;top:571.9px;" width="30" height="27" viewBox="0 0 30 27" overflow="visible"><rect x="1.6" y="3.8" width="27.8" height="23.6" rx="2" fill="#3A3A6A" opacity=".09"/><rect x="0" y="2.1" width="27.8" height="23.8" rx="2" fill="#FFCA2C"/><path d="M0 2A2 2 0 0 1 2 0h9.4a2 2 0 0 1 1.6 .9l.9 1.2H15.6V5.7H0z" fill="#EDB52A"/></svg>
<span class="t" style="left:343.0px;top:564.8px;font-size:41.9px;color:#000;-webkit-text-stroke:0.9px #000;transform:scaleX(.78);transform-origin:0 0;">?</span>
<span class="t" id="t36" style="left:377.29px;top:576.78px;font-size:22px;color:#000;letter-spacing:0.804px;">webstats</span>
<svg style="left:305.9px;top:609.9px;" width="30" height="27" viewBox="0 0 30 27" overflow="visible"><rect x="1.6" y="3.8" width="27.8" height="23.6" rx="2" fill="#3A3A6A" opacity=".09"/><rect x="0" y="2.1" width="27.8" height="23.8" rx="2" fill="#FFCA2C"/><path d="M0 2A2 2 0 0 1 2 0h9.4a2 2 0 0 1 1.6 .9l.9 1.2H15.6V5.7H0z" fill="#EDB52A"/></svg>
<span class="t" style="left:313.0px;top:602.8px;font-size:41.9px;color:#000;-webkit-text-stroke:0.9px #000;transform:scaleX(.78);transform-origin:0 0;">?</span>
<div style="left:3.8px;top:720px;width:162.5px;height:730.5px;background:#fff;"></div>
<div style="left:3.8px;top:752.5px;width:162.5px;height:1.2px;background:#E4E4E4;"></div>
<div style="left:3.8px;top:726px;width:1.5px;height:21px;background:#E5E5E5;"></div>
<span class="t" id="t37" style="left:11.23px;top:727.28px;font-size:22px;color:#000;letter-spacing:0.533px;">Filename</span>
<svg style="left:117px;top:728.4px;" width="26" height="16" viewBox="0 0 26 16" overflow="visible"><path d="M1.5 14L12.9 2.9L24.3 14" fill="none" stroke="#000" opacity=".10" stroke-width="4.4" transform="translate(1.3,1.3)"/><path d="M1.5 14L12.9 2.9L24.3 14" fill="none" stroke="#6A6A6A" stroke-width="4.4"/></svg>
<div class="clip" style="left:3.8px;top:754px;width:162.4px;height:666.2px;">
<svg style="left:0.20000000000000018px;top:6.100000000000023px;" width="30" height="27" viewBox="0 0 30 27" overflow="visible"><rect x="1.6" y="3.8" width="27.8" height="23.6" rx="2" fill="#3A3A6A" opacity=".09"/><rect x="0" y="2.1" width="27.8" height="23.8" rx="2" fill="#FFCA2C"/><path d="M0 2A2 2 0 0 1 2 0h9.4a2 2 0 0 1 1.6 .9l.9 1.2H15.6V5.7H0z" fill="#EDB52A"/></svg>
<span class="t" id="t38" style="left:41.82px;top:8.09px;font-size:26px;color:#000;letter-spacing:0.933px;">..</span>
<svg style="left:0.20000000000000018px;top:46.10000000000002px;" width="30" height="27" viewBox="0 0 30 27" overflow="visible"><rect x="1.6" y="3.8" width="27.8" height="23.6" rx="2" fill="#3A3A6A" opacity=".09"/><rect x="0" y="2.1" width="27.8" height="23.8" rx="2" fill="#FFCA2C"/><path d="M0 2A2 2 0 0 1 2 0h9.4a2 2 0 0 1 1.6 .9l.9 1.2H15.6V5.7H0z" fill="#EDB52A"/></svg>
<span class="t" id="t39" style="left:41.82px;top:48.09px;font-size:26px;color:#000;letter-spacing:0.194px;">.Trash</span>
<svg style="left:0.20000000000000018px;top:86.10000000000002px;" width="30" height="27" viewBox="0 0 30 27" overflow="visible"><rect x="1.6" y="3.8" width="27.8" height="23.6" rx="2" fill="#3A3A6A" opacity=".09"/><rect x="0" y="2.1" width="27.8" height="23.8" rx="2" fill="#FFCA2C"/><path d="M0 2A2 2 0 0 1 2 0h9.4a2 2 0 0 1 1.6 .9l.9 1.2H15.6V5.7H0z" fill="#EDB52A"/></svg>
<span class="t" id="t40" style="left:41.82px;top:88.09px;font-size:26px;color:#000;letter-spacing:1.265px;">.config</span>
<svg style="left:0.20000000000000018px;top:126.10000000000002px;" width="30" height="27" viewBox="0 0 30 27" overflow="visible"><rect x="1.6" y="3.8" width="27.8" height="23.6" rx="2" fill="#3A3A6A" opacity=".09"/><rect x="0" y="2.1" width="27.8" height="23.8" rx="2" fill="#FFCA2C"/><path d="M0 2A2 2 0 0 1 2 0h9.4a2 2 0 0 1 1.6 .9l.9 1.2H15.6V5.7H0z" fill="#EDB52A"/></svg>
<span class="t" id="t41" style="left:41.82px;top:128.09px;font-size:26px;color:#000;letter-spacing:1.025px;">.cups</span>
<svg style="left:0.20000000000000018px;top:166.10000000000002px;" width="30" height="27" viewBox="0 0 30 27" overflow="visible"><rect x="1.6" y="3.8" width="27.8" height="23.6" rx="2" fill="#3A3A6A" opacity=".09"/><rect x="0" y="2.1" width="27.8" height="23.8" rx="2" fill="#FFCA2C"/><path d="M0 2A2 2 0 0 1 2 0h9.4a2 2 0 0 1 1.6 .9l.9 1.2H15.6V5.7H0z" fill="#EDB52A"/></svg>
<span class="t" id="t42" style="left:41.82px;top:168.09px;font-size:26px;color:#000;letter-spacing:0.938px;">.kindle</span>
<svg style="left:0.20000000000000018px;top:206.10000000000002px;" width="30" height="27" viewBox="0 0 30 27" overflow="visible"><rect x="1.6" y="3.8" width="27.8" height="23.6" rx="2" fill="#3A3A6A" opacity=".09"/><rect x="0" y="2.1" width="27.8" height="23.8" rx="2" fill="#FFCA2C"/><path d="M0 2A2 2 0 0 1 2 0h9.4a2 2 0 0 1 1.6 .9l.9 1.2H15.6V5.7H0z" fill="#EDB52A"/></svg>
<span class="t" id="t43" style="left:43.85px;top:208.09px;font-size:26px;color:#000;letter-spacing:0.647px;">Applications</span>
<svg style="left:0.20000000000000018px;top:246.10000000000002px;" width="30" height="27" viewBox="0 0 30 27" overflow="visible"><rect x="1.6" y="3.8" width="27.8" height="23.6" rx="2" fill="#3A3A6A" opacity=".09"/><rect x="0" y="2.1" width="27.8" height="23.8" rx="2" fill="#FFCA2C"/><path d="M0 2A2 2 0 0 1 2 0h9.4a2 2 0 0 1 1.6 .9l.9 1.2H15.6V5.7H0z" fill="#EDB52A"/></svg>
<span class="t" id="t44" style="left:42.63px;top:248.09px;font-size:26px;color:#000;letter-spacing:0.380px;">Creative Cloud Files</span>
<svg style="left:0.20000000000000018px;top:286.0999999999999px;" width="30" height="27" viewBox="0 0 30 27" overflow="visible"><rect x="1.6" y="3.8" width="27.8" height="23.6" rx="2" fill="#3A3A6A" opacity=".09"/><rect x="0" y="2.1" width="27.8" height="23.8" rx="2" fill="#FFCA2C"/><path d="M0 2A2 2 0 0 1 2 0h9.4a2 2 0 0 1 1.6 .9l.9 1.2H15.6V5.7H0z" fill="#EDB52A"/></svg>
<span class="t" id="t45" style="left:41.82px;top:288.09px;font-size:26px;color:#000;letter-spacing:1.034px;">Desktop</span>
<svg style="left:0.20000000000000018px;top:326.0999999999999px;" width="30" height="27" viewBox="0 0 30 27" overflow="visible"><rect x="1.6" y="3.8" width="27.8" height="23.6" rx="2" fill="#3A3A6A" opacity=".09"/><rect x="0" y="2.1" width="27.8" height="23.8" rx="2" fill="#FFCA2C"/><path d="M0 2A2 2 0 0 1 2 0h9.4a2 2 0 0 1 1.6 .9l.9 1.2H15.6V5.7H0z" fill="#EDB52A"/></svg>
<span class="t" id="t46" style="left:41.82px;top:328.09px;font-size:26px;color:#000;letter-spacing:0.986px;">Documents</span>
<svg style="left:0.20000000000000018px;top:366.0999999999999px;" width="30" height="27" viewBox="0 0 30 27" overflow="visible"><rect x="1.6" y="3.8" width="27.8" height="23.6" rx="2" fill="#3A3A6A" opacity=".09"/><rect x="0" y="2.1" width="27.8" height="23.8" rx="2" fill="#FFCA2C"/><path d="M0 2A2 2 0 0 1 2 0h9.4a2 2 0 0 1 1.6 .9l.9 1.2H15.6V5.7H0z" fill="#EDB52A"/></svg>
<span class="t" id="t47" style="left:41.82px;top:368.09px;font-size:26px;color:#000;letter-spacing:0.409px;">Downloads</span>
<svg style="left:0.20000000000000018px;top:406.0999999999999px;" width="30" height="27" viewBox="0 0 30 27" overflow="visible"><rect x="1.6" y="3.8" width="27.8" height="23.6" rx="2" fill="#3A3A6A" opacity=".09"/><rect x="0" y="2.1" width="27.8" height="23.8" rx="2" fill="#FFCA2C"/><path d="M0 2A2 2 0 0 1 2 0h9.4a2 2 0 0 1 1.6 .9l.9 1.2H15.6V5.7H0z" fill="#EDB52A"/></svg>
<span class="t" id="t48" style="left:42.63px;top:408.09px;font-size:26px;color:#000;letter-spacing:0.287px;">Google Drive</span>
<svg style="left:0.20000000000000018px;top:446.0999999999999px;" width="30" height="27" viewBox="0 0 30 27" overflow="visible"><rect x="1.6" y="3.8" width="27.8" height="23.6" rx="2" fill="#3A3A6A" opacity=".09"/><rect x="0" y="2.1" width="27.8" height="23.8" rx="2" fill="#FFCA2C"/><path d="M0 2A2 2 0 0 1 2 0h9.4a2 2 0 0 1 1.6 .9l.9 1.2H15.6V5.7H0z" fill="#EDB52A"/></svg>
<span class="t" id="t49" style="left:41.82px;top:448.09px;font-size:26px;color:#000;letter-spacing:0.776px;">Library</span>
<svg style="left:0.20000000000000018px;top:486.0999999999999px;" width="30" height="27" viewBox="0 0 30 27" overflow="visible"><rect x="1.6" y="3.8" width="27.8" height="23.6" rx="2" fill="#3A3A6A" opacity=".09"/><rect x="0" y="2.1" width="27.8" height="23.8" rx="2" fill="#FFCA2C"/><path d="M0 2A2 2 0 0 1 2 0h9.4a2 2 0 0 1 1.6 .9l.9 1.2H15.6V5.7H0z" fill="#EDB52A"/></svg>
<span class="t" id="t50" style="left:41.82px;top:488.09px;font-size:26px;color:#000;letter-spacing:0.698px;">Movies</span>
<svg style="left:0.20000000000000018px;top:526.0999999999999px;" width="30" height="27" viewBox="0 0 30 27" overflow="visible"><rect x="1.6" y="3.8" width="27.8" height="23.6" rx="2" fill="#3A3A6A" opacity=".09"/><rect x="0" y="2.1" width="27.8" height="23.8" rx="2" fill="#FFCA2C"/><path d="M0 2A2 2 0 0 1 2 0h9.4a2 2 0 0 1 1.6 .9l.9 1.2H15.6V5.7H0z" fill="#EDB52A"/></svg>
<span class="t" id="t51" style="left:41.82px;top:528.09px;font-size:26px;color:#000;letter-spacing:1.061px;">Music</span>
<svg style="left:0.20000000000000018px;top:566.0999999999999px;" width="30" height="27" viewBox="0 0 30 27" overflow="visible"><rect x="1.6" y="3.8" width="27.8" height="23.6" rx="2" fill="#3A3A6A" opacity=".09"/><rect x="0" y="2.1" width="27.8" height="23.8" rx="2" fill="#FFCA2C"/><path d="M0 2A2 2 0 0 1 2 0h9.4a2 2 0 0 1 1.6 .9l.9 1.2H15.6V5.7H0z" fill="#EDB52A"/></svg>
<span class="t" id="t52" style="left:41.82px;top:568.09px;font-size:26px;color:#000;letter-spacing:0.846px;">Pictures</span>
<svg style="left:0.20000000000000018px;top:606.0999999999999px;" width="30" height="27" viewBox="0 0 30 27" overflow="visible"><rect x="1.6" y="3.8" width="27.8" height="23.6" rx="2" fill="#3A3A6A" opacity=".09"/><rect x="0" y="2.1" width="27.8" height="23.8" rx="2" fill="#FFCA2C"/><path d="M0 2A2 2 0 0 1 2 0h9.4a2 2 0 0 1 1.6 .9l.9 1.2H15.6V5.7H0z" fill="#EDB52A"/></svg>
<span class="t" id="t53" style="left:41.82px;top:608.09px;font-size:26px;color:#000;letter-spacing:0.665px;">Public</span>
<svg style="left:4.3999999999999995px;top:644.2px;" width="27" height="33" viewBox="0 0 27 33" overflow="visible"><path d="M2.4 2.4h16.6l7.4 7.4v22.2H2.4z" fill="#000" opacity=".04"/><path d="M.6 .6h16.8l7.4 7.4v24H.6z" fill="#FAFAFA" stroke="#ECECEC" stroke-width="1.1"/><path d="M17.4 .6v7.4h7.4z" fill="#F0F0F0" stroke="#E6E6E6" stroke-width="1"/></svg>
<span class="t" id="t54" style="left:41.82px;top:648.09px;font-size:26px;color:#000;letter-spacing:0.816px;">.CFUserTextEncoding</span>
</div>
<div style="left:166.3px;top:720px;width:28.1px;height:701.5px;background:#FAFAFA;border-left:1.7px solid #ECECEC;"></div>
<div style="left:174px;top:726px;width:15.7px;height:579.5px;background:#C1C1C1;border-radius:8px;"></div>
<div style="left:3.8px;top:1420.2px;width:164px;height:28.6px;background:#FAFAFA;border-top:1px solid #F3F3F3;"></div>
<div style="left:167.8px;top:1421.5px;width:26.6px;height:28px;background:#ECECEC;"></div>
<div style="left:10px;top:1428px;width:36px;height:15.6px;background:#C1C1C1;border-radius:8px;"></div>
<div style="left:3.8px;top:1449.5px;width:191.7px;height:1.5px;background:#C9C9C9;"></div>
<div class="clip" style="left:3.8px;top:1451px;width:191.7px;height:40px;">
<span class="t" id="t55" style="left:10.86px;top:4.08px;font-size:22px;color:#000;letter-spacing:0.508px;">3 files and 15 directories. Total size: 7,340 bytes</span>
</div>
<div style="left:209.5px;top:720px;width:2667px;height:730.5px;background:#fff;"></div>
<div style="left:209.5px;top:752.5px;width:2667px;height:1.2px;background:#E4E4E4;"></div>
<div style="left:209.5px;top:726px;width:3.6px;height:21px;background:#E5E5E5;"></div>
<div style="left:508px;top:726px;width:3.6px;height:21px;background:#E5E5E5;"></div>
<div style="left:658px;top:726px;width:3.6px;height:21px;background:#E5E5E5;"></div>
<div style="left:818px;top:726px;width:3.6px;height:21px;background:#E5E5E5;"></div>
<div style="left:1161.5px;top:726px;width:3.6px;height:21px;background:#E5E5E5;"></div>
<div style="left:1408px;top:726px;width:3.6px;height:21px;background:#E5E5E5;"></div>
<div style="left:1578px;top:726px;width:3.6px;height:21px;background:#E5E5E5;"></div>
<div style="left:2873px;top:726px;width:3.6px;height:21px;background:#E5E5E5;"></div>
<span class="t" id="t56" style="left:217.13px;top:727.28px;font-size:22px;color:#000;letter-spacing:0.590px;">Filename</span>
<span class="t" id="t57" style="left:573.23px;top:727.28px;font-size:22px;color:#000;letter-spacing:0.648px;">Filesize</span>
<span class="t" id="t58" style="left:667.43px;top:727.28px;font-size:22px;color:#000;letter-spacing:0.854px;">Filetype</span>
<span class="t" id="t59" style="left:826.93px;top:727.28px;font-size:22px;color:#000;letter-spacing:1.025px;">Last modified</span>
<span class="t" id="t60" style="left:1171.13px;top:727.28px;font-size:22px;color:#000;letter-spacing:0.690px;">Permissions</span>
<svg style="left:1309.4px;top:728.4px;" width="26" height="16" viewBox="0 0 26 16" overflow="visible"><path d="M1.5 14L12.9 2.9L24.3 14" fill="none" stroke="#000" opacity=".10" stroke-width="4.4" transform="translate(1.3,1.3)"/><path d="M1.5 14L12.9 2.9L24.3 14" fill="none" stroke="#6A6A6A" stroke-width="4.4"/></svg>
<span class="t" id="t61" style="left:1417.52px;top:727.28px;font-size:22px;color:#000;letter-spacing:0.637px;">Owner/Group</span>
<div style="left:209.5px;top:834px;width:1370.5px;height:40px;background:#9F30D2;"></div>
<svg style="left:210.1px;top:760.1px;" width="30" height="27" viewBox="0 0 30 27" overflow="visible"><rect x="1.6" y="3.8" width="27.8" height="23.6" rx="2" fill="#3A3A6A" opacity=".09"/><rect x="0" y="2.1" width="27.8" height="23.8" rx="2" fill="#FFCA2C"/><path d="M0 2A2 2 0 0 1 2 0h9.4a2 2 0 0 1 1.6 .9l.9 1.2H15.6V5.7H0z" fill="#EDB52A"/></svg>
<span class="t" id="t62" style="left:252.02px;top:762.09px;font-size:26px;color:#000;letter-spacing:0.933px;">..</span>
<svg style="left:210.1px;top:800.1px;" width="30" height="27" viewBox="0 0 30 27" overflow="visible"><rect x="1.6" y="3.8" width="27.8" height="23.6" rx="2" fill="#3A3A6A" opacity=".09"/><rect x="0" y="2.1" width="27.8" height="23.8" rx="2" fill="#FFCA2C"/><path d="M0 2A2 2 0 0 1 2 0h9.4a2 2 0 0 1 1.6 .9l.9 1.2H15.6V5.7H0z" fill="#EDB52A"/></svg>
<span class="t" id="t63" style="left:252.42px;top:802.09px;font-size:26px;color:#000;letter-spacing:0.580px;">logs</span>
<span class="t" id="t64" style="left:659.12px;top:802.09px;font-size:26px;color:#000;letter-spacing:0.965px;">Directory</span>
<span class="t" id="t65" style="left:818.52px;top:802.09px;font-size:26px;color:#000;letter-spacing:0.852px;">11/04/2021 23:54:40</span>
<span class="t" id="t66" style="left:1164.04px;top:802.09px;font-size:26px;color:#000;letter-spacing:1.342px;">0755</span>
<span class="t" id="t67" style="left:1408.93px;top:802.09px;font-size:26px;color:#000;letter-spacing:0.665px;">772 772</span>
<svg style="left:210.1px;top:840.1px;" width="30" height="27" viewBox="0 0 30 27" overflow="visible"><rect x="1.6" y="3.8" width="27.8" height="23.6" rx="2" fill="#3A3A6A" opacity=".09"/><rect x="0" y="2.1" width="27.8" height="23.8" rx="2" fill="#FFCA2C"/><path d="M0 2A2 2 0 0 1 2 0h9.4a2 2 0 0 1 1.6 .9l.9 1.2H15.6V5.7H0z" fill="#EDB52A"/></svg>
<span class="t" id="t68" style="left:252.42px;top:842.09px;font-size:26px;color:#fff;letter-spacing:1.033px;">public_html</span>
<span class="t" id="t69" style="left:659.12px;top:842.09px;font-size:26px;color:#fff;letter-spacing:0.965px;">Directory</span>
<span class="t" id="t70" style="left:818.52px;top:842.09px;font-size:26px;color:#fff;letter-spacing:0.514px;">11/05/2021 10:20:25</span>
<span class="t" id="t71" style="left:1164.04px;top:842.09px;font-size:26px;color:#fff;letter-spacing:1.342px;">0755</span>
<span class="t" id="t72" style="left:1408.93px;top:842.09px;font-size:26px;color:#fff;letter-spacing:0.665px;">772 772</span>
<svg style="left:210.1px;top:880.1px;" width="30" height="27" viewBox="0 0 30 27" overflow="visible"><rect x="1.6" y="3.8" width="27.8" height="23.6" rx="2" fill="#3A3A6A" opacity=".09"/><rect x="0" y="2.1" width="27.8" height="23.8" rx="2" fill="#FFCA2C"/><path d="M0 2A2 2 0 0 1 2 0h9.4a2 2 0 0 1 1.6 .9l.9 1.2H15.6V5.7H0z" fill="#EDB52A"/></svg>
<span class="t" id="t73" style="left:254.46px;top:882.09px;font-size:26px;color:#000;letter-spacing:0.515px;">webstats</span>
<span class="t" id="t74" style="left:659.12px;top:882.09px;font-size:26px;color:#000;letter-spacing:0.965px;">Directory</span>
<span class="t" id="t75" style="left:818.52px;top:882.09px;font-size:26px;color:#000;letter-spacing:0.819px;">11/04/2021 23:42:53</span>
<span class="t" id="t76" style="left:1164.04px;top:882.09px;font-size:26px;color:#000;letter-spacing:1.342px;">0755</span>
<span class="t" id="t77" style="left:1408.93px;top:882.09px;font-size:26px;color:#000;letter-spacing:0.665px;">772 772</span>
<div style="left:209.5px;top:1449.5px;width:2667px;height:1.5px;background:#C9C9C9;"></div>
<span class="t" id="t78" style="left:220.26px;top:1455.08px;font-size:22px;color:#000;letter-spacing:0.783px;">Selected 1 directory.</span>
<div style="left:1143.9px;top:661.9px;width:235.9px;height:286.2px;border:10.1px solid #FE5A4B;filter:drop-shadow(0 4.4px 2.1px rgba(30,40,40,.8));"></div>
<div style="left:2px;top:1502px;width:2876.5px;height:208px;background:#fff;border:1px solid #D9D9D9;border-bottom:2px solid #C2C2C2;border-top:2px solid #E2E2E2;"></div>
<div style="left:4px;top:1537px;width:2872px;height:1.2px;background:#E4E4E4;"></div>
<div style="left:4px;top:1510.5px;width:3.6px;height:21px;background:#E5E5E5;"></div>
<div style="left:362px;top:1510.5px;width:3.6px;height:21px;background:#E5E5E5;"></div>
<div style="left:482px;top:1510.5px;width:3.6px;height:21px;background:#E5E5E5;"></div>
<div style="left:842px;top:1510.5px;width:3.6px;height:21px;background:#E5E5E5;"></div>
<div style="left:1002px;top:1510.5px;width:3.6px;height:21px;background:#E5E5E5;"></div>
<div style="left:1122.5px;top:1510.5px;width:3.6px;height:21px;background:#E5E5E5;"></div>
<div style="left:1422.5px;top:1510.5px;width:3.6px;height:21px;background:#E5E5E5;"></div>
<div style="left:2873px;top:1510.5px;width:3.6px;height:21px;background:#E5E5E5;"></div>
<span class="t" id="t79" style="left:11.96px;top:1511.08px;font-size:22px;color:#000;letter-spacing:0.653px;">Server/Local file</span>
<span class="t" id="t80" style="left:375.43px;top:1511.08px;font-size:22px;color:#000;letter-spacing:1.106px;">Direction</span>
<span class="t" id="t81" style="left:491.43px;top:1511.08px;font-size:22px;color:#000;letter-spacing:0.734px;">Remote file</span>
<span class="t" id="t82" style="left:952.26px;top:1511.08px;font-size:22px;color:#000;letter-spacing:0.294px;">Size</span>
<span class="t" id="t83" style="left:1010.93px;top:1511.08px;font-size:22px;color:#000;letter-spacing:0.967px;">Priority</span>
<span class="t" id="t84" style="left:1132.26px;top:1511.08px;font-size:22px;color:#000;letter-spacing:0.861px;">Status</span>
<div style="left:0px;top:1714.6px;width:2880px;height:49.4px;background:linear-gradient(#D2D2D2 0,#DADADA 2.5%,#E2E2E2 40%,#EFEFEF 88%);"></div>
<div style="left:0px;top:1763.6px;width:2880px;height:1.5px;background:#C6C6C6;"></div>
<div style="left:205.3px;top:1716.4px;width:232.9px;height:39.6px;background:linear-gradient(#E5E5E5 0,#E3E3E3 50%,#DBDBDB 52%,#DDDDDD 100%);border:1px solid #C2C2C2;border-top-color:#D0D0D0;border-radius:0 0 6px 6px;"></div>
<div style="left:439.3px;top:1716.4px;width:299px;height:39.6px;background:linear-gradient(#E5E5E5 0,#E3E3E3 50%,#DBDBDB 52%,#DDDDDD 100%);border:1px solid #C2C2C2;border-top-color:#D0D0D0;border-radius:0 0 6px 6px;"></div>
<div style="left:10.8px;top:1716.4px;width:193.3px;height:39.8px;background:linear-gradient(#FFFFFF,#FBFBFB 55%,#EFEFEF);border:1px solid #BDBDBD;border-top-color:#E0E0E0;border-radius:0 0 6px 6px;box-shadow:0 1px 1px rgba(0,0,0,.12);"></div>
<span class="t" id="t85" style="left:26.14px;top:1721.59px;font-size:26px;color:#000;font-weight:700;letter-spacing:0.557px;">Queued files</span>
<span class="t" id="t86" style="left:218.92px;top:1721.59px;font-size:26px;color:#000;letter-spacing:0.537px;">Failed transfers</span>
<span class="t" id="t87" style="left:453.94px;top:1721.59px;font-size:26px;color:#000;letter-spacing:0.702px;">Successful transfers</span>
<svg style="left:2430px;top:1768px;" width="32" height="31" viewBox="0 0 32 31" overflow="visible"><path d="M7 14V10.5A8 8 0 0 1 23 10.5V14" fill="none" stroke="#8A8A8A" stroke-width="3.4"/><rect x="2" y="14.8" width="29" height="15" rx="2" fill="#000" opacity=".10"/><rect x="0" y="12.6" width="29.4" height="16.4" rx="2.2" fill="#FBC02D"/><rect x="15" y="12.6" width="14.4" height="16.4" rx="2.2" fill="#F0B429"/><circle cx="15" cy="19.4" r="2.6" fill="#6B5A3A"/><path d="M13.6 20.5H16.4L17 25.8H13z" fill="#6B5A3A"/></svg>
<svg style="left:2468.5px;top:1767.5px;" width="31" height="31" viewBox="0 0 31 31" overflow="visible"><g transform="translate(1.3,1.5)" opacity=".12"><polygon points="29.06,17.46 26.68,23.21 24.08,22.35 22.05,24.38 22.91,26.98 17.16,29.36 15.93,26.92 13.07,26.92 11.84,29.36 6.09,26.98 6.95,24.38 4.92,22.35 2.32,23.21 -0.06,17.46 2.38,16.23 2.38,13.37 -0.06,12.14 2.32,6.39 4.92,7.25 6.95,5.22 6.09,2.62 11.84,0.24 13.07,2.68 15.93,2.68 17.16,0.24 22.91,2.62 22.05,5.22 24.08,7.25 26.68,6.39 29.06,12.14 26.62,13.37 26.62,16.23" fill="#000"/></g><polygon points="29.06,17.46 26.68,23.21 24.08,22.35 22.05,24.38 22.91,26.98 17.16,29.36 15.93,26.92 13.07,26.92 11.84,29.36 6.09,26.98 6.95,24.38 4.92,22.35 2.32,23.21 -0.06,17.46 2.38,16.23 2.38,13.37 -0.06,12.14 2.32,6.39 4.92,7.25 6.95,5.22 6.09,2.62 11.84,0.24 13.07,2.68 15.93,2.68 17.16,0.24 22.91,2.62 22.05,5.22 24.08,7.25 26.68,6.39 29.06,12.14 26.62,13.37 26.62,16.23" fill="#787878"/><circle cx="14.5" cy="14.8" r="8.6" fill="#F6F6F6"/><text x="14.5" y="20.3" font-family="Liberation Sans, sans-serif" font-weight="700" font-size="15.5" text-anchor="middle" fill="#14C544" stroke="#14C544" stroke-width=".5">A</text></svg>
<svg style="left:2506.6px;top:1768px;" width="31" height="31" viewBox="0 0 31 31" overflow="visible"><circle cx="15.6" cy="16" r="13.6" fill="#000" opacity=".10"/><circle cx="14.6" cy="14.8" r="12.9" fill="#F4F4F4" stroke="#8A8A8A" stroke-width="2.8"/><path d="M6.2 21.5A10 10 0 0 1 21.8 8.5" fill="none" stroke="#9A9A9A" stroke-width="3.4"/><path d="M14 16L19.4 10.6" stroke="#777" stroke-width="2.6" stroke-linecap="round"/><circle cx="14.2" cy="15.8" r="2.3" fill="#777"/><circle cx="14.2" cy="15.8" r=".9" fill="#F4F4F4"/></svg>
<svg style="left:2814.4px;top:1771.4px;" width="20" height="20" viewBox="0 0 20 20" overflow="visible"><radialGradient id="lg" cx=".4" cy=".35" r=".7"><stop offset="0" stop-color="#4DB07A"/><stop offset=".55" stop-color="#2E7A4E"/><stop offset="1" stop-color="#2C3F33"/></radialGradient><circle cx="9.6" cy="9.6" r="9.6" fill="#C9C9C9"/><circle cx="9.6" cy="9.6" r="8.7" fill="url(#lg)"/></svg>
<svg style="left:2844.2px;top:1771.4px;" width="20" height="20" viewBox="0 0 20 20" overflow="visible"><radialGradient id="lr" cx=".4" cy=".35" r=".7"><stop offset="0" stop-color="#CE5A4C"/><stop offset=".55" stop-color="#96392F"/><stop offset="1" stop-color="#4A2B28"/></radialGradient><circle cx="9.6" cy="9.6" r="9.6" fill="#C9C9C9"/><circle cx="9.6" cy="9.6" r="8.7" fill="url(#lr)"/></svg>
<span class="t" id="t88" style="left:2560.22px;top:1769.38px;font-size:22px;color:#000;letter-spacing:0.695px;">Queue: empty</span>
</body></html>
